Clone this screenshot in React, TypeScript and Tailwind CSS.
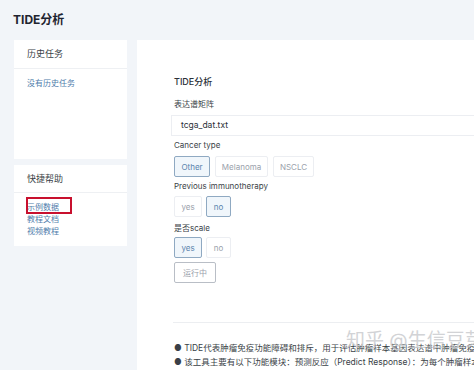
const font = { fontFamily: '"Inter", "Noto Sans CJK SC", sans-serif' };

const Choice = ({ label, active, w }: { label: string; active?: boolean; w: string }) => (
    <div
        className={`${w} h-[21px] flex items-center justify-center rounded-[2px] border text-[8px] ${
            active ? 'border-[#8fa9c2] bg-[#f0f6fb] text-[#5a84ad]' : 'border-[#eceef2] bg-white text-[#9aa1ab]'
        }`}
    >
        {label}
    </div>
);

const Label = ({ children, mt }: { children: string; mt: string }) => (
    <div className={`${mt} h-[14px] leading-[14px] text-[8px] text-[#3a3f47]`}>{children}</div>
);

export default function App() {
    return (
        <div className="relative w-[474px] h-[370px] overflow-hidden bg-[#f2f5f9]" style={font}>
            <div className="h-10 pl-[13px] flex items-center text-[12px] font-bold text-[#1f2430]">TIDE分析</div>

            <div className="flex gap-[10px] pl-[14px]">
                <div className="w-[113px] shrink-0 flex flex-col gap-[6px]">
                    <div className="bg-white h-[119px]">
                        <div className="h-[29px] px-[13px] flex items-center text-[9px] text-[#3a3f47] border-b border-[#eef0f3]">历史任务</div>
                        <div className="px-[13px] pt-[8px] text-[8px] leading-[12px] text-[#4f7dab]">没有历史任务</div>
                    </div>
                    <div className="bg-white h-[81px]">
                        <div className="h-[28px] px-[13px] flex items-center text-[9px] text-[#3a3f47] border-b border-[#eef0f3]">快捷帮助</div>
                        <div className="relative px-[13px] pt-[8px] text-[8px] leading-[12px] text-[#4f7dab] flex flex-col">
                            <span>示例数据</span>
                            <span>教程文档</span>
                            <span>视频教程</span>
                            <div className="absolute left-[12px] top-[4px] w-[46px] h-[17px] border-2 border-[#c8102e]" />
                        </div>
                    </div>
                </div>

                <div className="w-[420px] h-[330px] shrink-0 bg-white pl-[37px] pt-[35px]">
                    <div className="h-[14px] leading-[14px] text-[9px] font-medium text-[#2b3038]">TIDE分析</div>
                    <Label mt="mt-[8px]">表达谱矩阵</Label>
                    <div className="mt-[4px] -ml-[3px] h-[21px] border border-[#eceef2] pl-[9px] flex items-center text-[8.5px] text-[#2b3038]">tcga_dat.txt</div>

                    <Label mt="mt-[2px]">Cancer type</Label>
                    <div className="mt-[4px] flex gap-[5px]">
                        <Choice label="Other" active w="w-[36px]" />
                        <Choice label="Melanoma" w="w-[53px]" />
                        <Choice label="NSCLC" w="w-[41px]" />
                    </div>

                    <Label mt="mt-[2px]">Previous immunotherapy</Label>
                    <div className="mt-[3px] flex gap-[4px]">
                        <Choice label="yes" w="w-[28px]" />
                        <Choice label="no" active w="w-[25px]" />
                    </div>

                    <Label mt="mt-[4px]">是否scale</Label>
                    <div className="mt-[2px] flex gap-[4px]">
                        <Choice label="yes" active w="w-[28px]" />
                        <Choice label="no" w="w-[25px]" />
                    </div>

                    <div className="mt-[4px] w-[42px] h-[21px] flex items-center justify-center rounded-[2px] border border-[#b9bec6] text-[8px] text-[#9aa1ab]">运行中</div>

                    <div className="mt-[39px] -ml-[1px] border-t border-[#eceef1]" />

                    <div className="mt-[18px] text-[8.5px] leading-[14px] text-[#3a3f47] whitespace-nowrap">
                        <div>● TIDE代表肿瘤免疫功能障碍和排斥，用于评估肿瘤样本基因表达谱中肿瘤免疫逃逸的可能性</div>
                        <div>● 该工具主要有以下功能模块：预测反应（Predict Response）：为每个肿瘤样本计算TIDE评分</div>
                    </div>
                </div>
            </div>

            <div className="absolute left-[346px] top-[330px] text-[19px] leading-[22px] text-[#c7c9cd] opacity-80 whitespace-nowrap">知乎 @生信豆芽菜</div>
        </div>
    );
}
